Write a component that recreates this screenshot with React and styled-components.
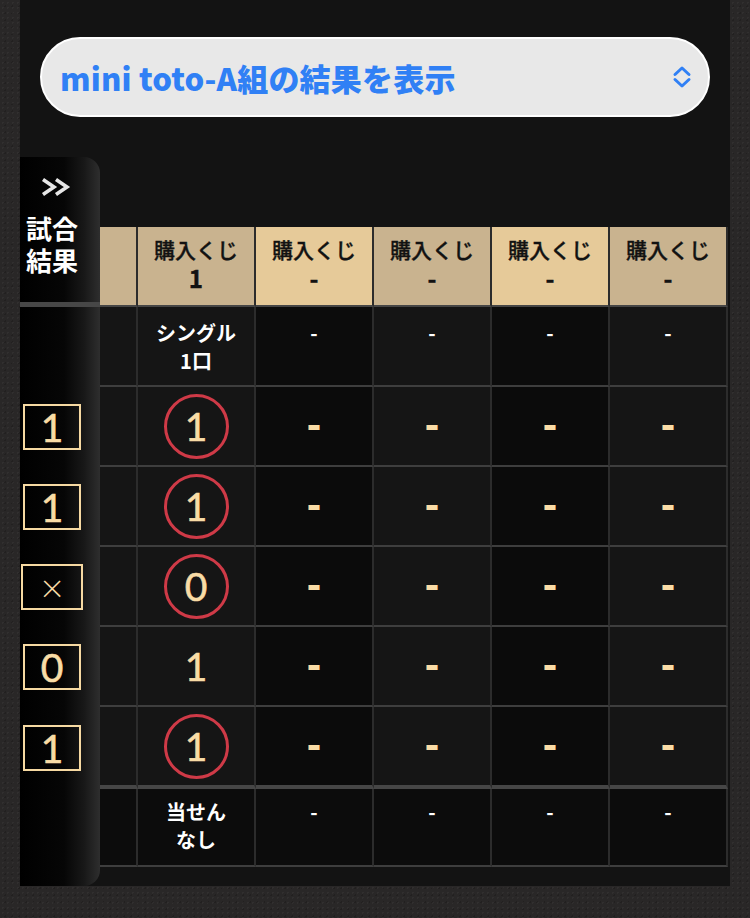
import React from "react";
import styled, { createGlobalStyle } from "styled-components";

const picks = [
  { mark: "1", pick: "1", hit: true },
  { mark: "1", pick: "1", hit: true },
  { mark: "×", pick: "0", hit: true },
  { mark: "0", pick: "1", hit: false },
  { mark: "1", pick: "1", hit: true },
];

const columns = ["", "1", "-", "-", "-", "-"];

const App = () => {
  return (
    <>
      <GlobalStyle />
      <Page>
        <SelectBox>
          <span>mini toto-A組の結果を表示</span>
          <svg width="20" height="24" viewBox="0 0 20 24" fill="none">
            <path
              d="M3 9.5 L10 3 L17 9.5 M3 14.5 L10 21 L17 14.5"
              stroke="#3080f5"
              strokeWidth="3"
              strokeLinecap="round"
              strokeLinejoin="round"
            />
          </svg>
        </SelectBox>

        <Board>
          <Sheet>
            <Row>
              {columns.map((c, i) => (
                <HeadCell key={i} $alt={i === 2 || i === 4}>
                  {i > 0 && (
                    <>
                      <div>購入くじ</div>
                      <HeadNo>{c}</HeadNo>
                    </>
                  )}
                </HeadCell>
              ))}
            </Row>

            <Row>
              {columns.map((c, i) => (
                <NoteCell key={i} $alt={i === 2 || i === 4}>
                  {i === 1 ? (
                    <>
                      <div>シングル</div>
                      <div>1口</div>
                    </>
                  ) : i > 1 ? (
                    "-"
                  ) : null}
                </NoteCell>
              ))}
            </Row>

            {picks.map((p, r) => (
              <Row key={r}>
                {columns.map((c, i) => (
                  <PickCell
                    key={i}
                    $alt={i === 2 || i === 4}
                    $last={r === picks.length - 1}
                  >
                    {i === 1 ? (
                      p.hit ? (
                        <Ring>{p.pick}</Ring>
                      ) : (
                        <Digit>{p.pick}</Digit>
                      )
                    ) : i > 1 ? (
                      <Dash>-</Dash>
                    ) : null}
                  </PickCell>
                ))}
              </Row>
            ))}

            <Row>
              {columns.map((c, i) => (
                <NoteCell key={i} $dark>
                  {i === 1 ? (
                    <>
                      <div>当せん</div>
                      <div>なし</div>
                    </>
                  ) : i > 1 ? (
                    "-"
                  ) : null}
                </NoteCell>
              ))}
            </Row>
          </Sheet>

          <Side>
            <SideHead>
              <svg width="30" height="20" viewBox="0 0 30 20" fill="none">
                <path
                  d="M2 2.5 L13 10 L2 17.5 M15 2.5 L26 10 L15 17.5"
                  stroke="#e6e6e6"
                  strokeWidth="3.6"
                />
              </svg>
              <SideTitle>試合結果</SideTitle>
            </SideHead>
            <SideRow />
            {picks.map((p, r) => (
              <SideRow key={r} $last={r === picks.length - 1}>
                <MarkBox $wide={p.mark === "×"}>{p.mark}</MarkBox>
              </SideRow>
            ))}
          </Side>
        </Board>
      </Page>
    </>
  );
};

const GlobalStyle = createGlobalStyle`
  body {
    margin: 0;
    background-color: #292727;
    background-image:
      radial-gradient(rgba(255, 255, 255, 0.035) 1px, transparent 1px),
      radial-gradient(rgba(0, 0, 0, 0.18) 1px, transparent 1px);
    background-size: 5px 5px, 7px 7px;
    background-position: 0 0, 2px 3px;
    font-family: "Noto Sans CJK JP", "Noto Sans", sans-serif;
  }
`;

const Page = styled.div`
  width: 710px;
  height: 886px;
  margin-left: 20px;
  padding-top: 37px;
  box-sizing: border-box;
  background: #131313;
`;

const SelectBox = styled.div`
  margin: 0 20px;
  height: 80px;
  box-sizing: border-box;
  border: 2px solid #ffffff;
  border-radius: 40px;
  background: #e8e8e8;
  display: flex;
  align-items: center;
  justify-content: space-between;
  padding: 0 16px 0 18px;
  color: #3080f5;
  font-size: 31px;
  font-weight: 900;
  letter-spacing: 0.2px;
`;

const Board = styled.div`
  position: relative;
  margin-top: 40px;
  padding-top: 70px;
`;

const Sheet = styled.div`
  display: flex;
  flex-direction: column;
`;

const Row = styled.div`
  display: flex;
`;

const Cell = styled.div`
  width: 118px;
  flex: none;
  box-sizing: border-box;
  border-right: 2px solid #2c2c2c;
  border-bottom: 2px solid #3e3e3e;
  text-align: center;
`;

const HeadCell = styled(Cell)`
  height: 80px;
  padding-top: 8px;
  background: ${(p) => (p.$alt ? "#e6ca99" : "#c9b38f")};
  border-bottom-color: #464646;
  color: #121212;
  font-size: 21px;
  font-weight: 500;
  line-height: 29px;
  -webkit-text-stroke: 0.35px #121212;
`;

const HeadNo = styled.div`
  font-size: 21px;
  font-weight: 700;
  line-height: 29px;
  transform: scale(1.15);
`;

const NoteCell = styled(Cell)`
  height: ${(p) => (p.$dark ? "78px" : "80px")};
  padding-top: ${(p) => (p.$dark ? "9px" : "12px")};
  background: ${(p) => (p.$dark || p.$alt ? "#0c0c0c" : "#151515")};
  color: #ffffff;
  font-size: 20px;
  font-weight: 700;
  line-height: 28px;
`;

const PickCell = styled(Cell)`
  height: ${(p) => (p.$last ? "82px" : "80px")};
  border-bottom-width: ${(p) => (p.$last ? "4px" : "2px")};
  border-bottom-color: ${(p) => (p.$last ? "#464646" : "#3e3e3e")};
  background: ${(p) => (p.$alt ? "#0b0b0b" : "#151515")};
  display: flex;
  align-items: center;
  justify-content: center;
`;

const Digit = styled.span`
  font-family: Lato, "DejaVu Sans", sans-serif;
  font-size: 39px;
  font-weight: 400;
  line-height: 1;
  color: #f9dca6;
  -webkit-text-stroke: 0.6px #f9dca6;
`;

const Ring = styled(Digit)`
  width: 65px;
  height: 65px;
  box-sizing: border-box;
  border: 3.5px solid #cf3a47;
  border-radius: 50%;
  display: flex;
  align-items: center;
  justify-content: center;
`;

const Dash = styled.span`
  font-family: "DejaVu Sans", sans-serif;
  font-weight: 700;
  font-size: 36px;
  line-height: 1;
  color: #f9dca6;
`;

const Side = styled.div`
  position: absolute;
  left: 0;
  top: 0;
  width: 80px;
  height: 729px;
  padding-right: 16px;
  box-sizing: border-box;
  border-radius: 0 16px 16px 0;
  background: linear-gradient(to right, #000000 0%, #060606 55%, #181818 80%, #2e2e2e 100%);
  display: flex;
  flex-direction: column;
`;

const SideHead = styled.div`
  height: 150px;
  margin-right: -16px;
  padding: 20px 16px 0 8px;
  box-sizing: border-box;
  border-bottom: 5px solid #474747;
  display: flex;
  flex-direction: column;
  align-items: center;
  gap: 15px;
`;

const SideTitle = styled.div`
  width: 54px;
  color: #ffffff;
  font-size: 26px;
  font-weight: 700;
  line-height: 32px;
  text-align: center;
  margin-left: -8px;
`;

const SideRow = styled.div`
  height: ${(p) => (p.$last ? "82px" : "80px")};
  display: flex;
  align-items: center;
  justify-content: center;
`;

const MarkBox = styled.div`
  width: ${(p) => (p.$wide ? "62px" : "58px")};
  height: 46px;
  box-sizing: border-box;
  border: 2px solid #f6d9a2;
  display: flex;
  align-items: center;
  justify-content: center;
  font-family: Lato, "DejaVu Sans", sans-serif;
  font-size: ${(p) => (p.$wide ? "40px" : "39px")};
  font-weight: ${(p) => (p.$wide ? 300 : 400)};
  line-height: 1;
  color: #f9dca6;
  -webkit-text-stroke: ${(p) => (p.$wide ? "0" : "0.6px #f9dca6")};
`;

export default App;
